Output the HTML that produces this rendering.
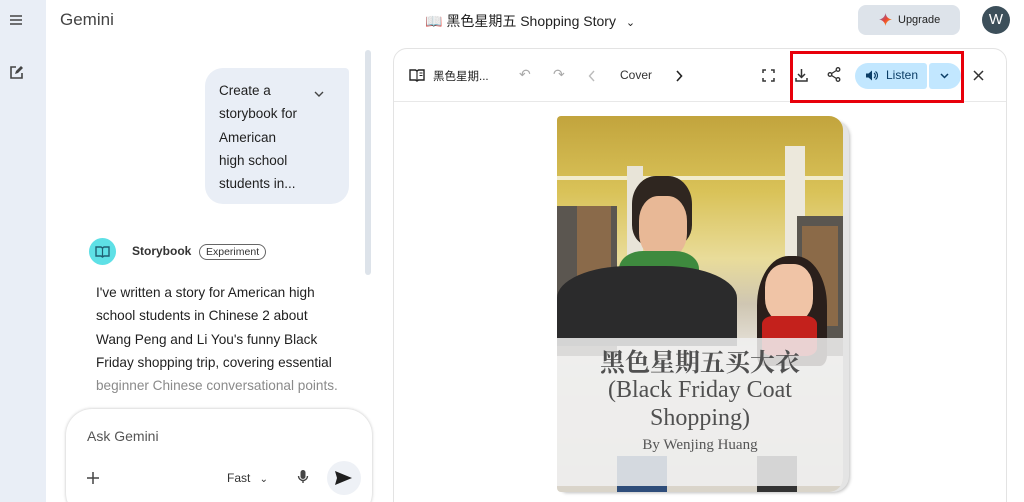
<!DOCTYPE html>
<html><head><meta charset="utf-8">
<style>
*{box-sizing:border-box;margin:0;padding:0}
html,body{width:1024px;height:502px;overflow:hidden}
body{background:#fff;font-family:"Liberation Sans","Noto Sans CJK SC",sans-serif;color:#1f1f1f;position:relative}
.a{position:absolute}
svg{display:block}
</style></head><body>
<div class="a" style="left:0;top:0;width:46px;height:502px;background:#e9eef6"></div>
<svg class="a" style="left:9px;top:13px" width="14" height="14" viewBox="0 0 14 14"><path d="M1 3h12M1 7h12M1 11h12" stroke="#444" stroke-width="1.6"/></svg>
<svg class="a" style="left:9px;top:65px" width="15" height="15" viewBox="0 0 15 15"><path d="M7 2H2v11h11V8" fill="none" stroke="#444" stroke-width="1.6"/><path d="M6 9l1-3 5-5 2 2-5 5z" fill="#444"/></svg>
<div class="a" style="left:60px;top:10px;font-size:17px;color:#444">Gemini</div>

<div class="a" style="left:425px;top:11px;font-size:14px;color:#1f1f1f">📖 黑色星期五 Shopping Story <span style="font-size:11px;margin-left:6px">⌄</span></div>
<div class="a" style="left:858px;top:5px;width:102px;height:30px;background:#dde3ea;border-radius:8px;font-size:11px;line-height:30px;padding-left:40px;color:#1f1f1f">Upgrade</div>
<svg class="a" style="left:879px;top:13px" width="13" height="13" viewBox="0 0 14 14"><defs><linearGradient id="g" x1="0" y1="0" x2="1" y2="1"><stop offset="0" stop-color="#4285f4"/><stop offset=".5" stop-color="#ea4335"/><stop offset="1" stop-color="#fbbc04"/></linearGradient></defs><path d="M7 0C7.6 4 10 6.4 14 7 10 7.6 7.6 10 7 14 6.4 10 4 7.6 0 7 4 6.4 6.4 4 7 0z" fill="url(#g)"/></svg>
<div class="a" style="left:982px;top:6px;width:28px;height:28px;border-radius:50%;background:#3c4f5a;color:#fff;font-size:15px;line-height:28px;text-align:center">W</div>

<div class="a" style="left:365px;top:50px;width:6px;height:225px;background:#dde3ea;border-radius:3px"></div>
<div class="a" style="left:205px;top:68px;width:144px;height:136px;background:#e9eef6;border-radius:18px 4px 18px 18px"></div>
<div class="a" style="left:219px;top:79px;font-size:13.5px;line-height:23.3px;color:#1f1f1f;width:110px">Create a<br>storybook for<br>American<br>high school<br>students in...</div>
<svg class="a" style="left:313px;top:90px" width="12" height="8" viewBox="0 0 12 8"><path d="M2 2l4 4 4-4" fill="none" stroke="#444" stroke-width="1.4"/></svg>
<div class="a" style="left:89px;top:238px;width:27px;height:27px;border-radius:50%;background:#5ee0e6"></div>
<svg class="a" style="left:95px;top:245px" width="15" height="13" viewBox="0 0 15 13"><path d="M1 2h5l1.5 1 1.5-1h5v9H9l-1.5 1L6 11H1z" fill="none" stroke="#1f5f73" stroke-width="1.4"/><path d="M7.5 3v8" stroke="#1f5f73" stroke-width="1.2"/></svg>
<div class="a" style="left:132px;top:244px;font-size:12px;font-weight:bold;color:#333">Storybook</div>
<div class="a" style="left:199px;top:244px;height:16px;padding:0 6px;border:1px solid #666;border-radius:9px;font-size:10.5px;line-height:14px;color:#333">Experiment</div>
<div class="a" style="left:96px;top:281px;font-size:13.6px;line-height:23.3px;color:#1f1f1f;width:270px">I've written a story for American high<br>school students in Chinese 2 about<br>Wang Peng and Li You's funny Black<br>Friday shopping trip, covering essential<br><span style="color:#8a8a8a">beginner Chinese conversational points.</span></div>
<div class="a" style="left:66px;top:409px;width:306px;height:110px;border-radius:26px;background:#fff;box-shadow:0 0 3px rgba(0,0,0,.25)"></div>
<div class="a" style="left:87px;top:428px;font-size:14px;color:#555">Ask Gemini</div>
<svg class="a" style="left:86px;top:471px" width="14" height="14" viewBox="0 0 14 14"><path d="M7 1v12M1 7h12" stroke="#444" stroke-width="1.5"/></svg>
<div class="a" style="left:227px;top:471px;font-size:12px;color:#333">Fast <span style="font-size:10px;margin-left:6px">⌄</span></div>
<svg class="a" style="left:297px;top:469px" width="12" height="16" viewBox="0 0 12 16"><rect x="3.5" y="1" width="5" height="9" rx="2.5" fill="#444"/><path d="M1.5 7a4.5 4.5 0 009 0M6 11.5V14" fill="none" stroke="#444" stroke-width="1.4"/></svg>
<div class="a" style="left:327px;top:461px;width:34px;height:34px;border-radius:50%;background:#eef1f6"></div>
<svg class="a" style="left:335px;top:471px" width="17" height="14" viewBox="0 0 17 14"><path d="M0 0l17 7-17 7 2-7z" fill="#1f1f1f"/></svg>

<div class="a" style="left:393px;top:48px;width:614px;height:470px;border:1px solid #e3e3e3;border-radius:14px"></div>
<div class="a" style="left:394px;top:101px;width:612px;height:1px;background:#e8e8e8"></div>
<svg class="a" style="left:409px;top:69px" width="16" height="13" viewBox="0 0 16 13"><path d="M1 1h5.5L8 2l1.5-1H15v10H9.5L8 12l-1.5-1H1z" fill="none" stroke="#222" stroke-width="1.4"/><path d="M8 2v10M10.5 4h3M10.5 6.5h3" stroke="#222" stroke-width="1.1"/></svg>
<div class="a" style="left:433px;top:68px;font-size:11.5px;color:#1f1f1f">黑色星期...</div>
<div class="a" style="left:519px;top:66px;font-size:14px;color:#aaa">↶</div>
<div class="a" style="left:553px;top:66px;font-size:14px;color:#aaa">↷</div>
<svg class="a" style="left:588px;top:70px" width="8" height="12" viewBox="0 0 8 12"><path d="M6 1L1.5 6 6 11" fill="none" stroke="#bbb" stroke-width="1.4"/></svg>
<div class="a" style="left:620px;top:68px;font-size:12px;color:#333">Cover</div>
<svg class="a" style="left:675px;top:70px" width="8" height="12" viewBox="0 0 8 12"><path d="M2 1l4.5 5L2 11" fill="none" stroke="#222" stroke-width="1.6"/></svg>
<svg class="a" style="left:762px;top:69px" width="13" height="13" viewBox="0 0 13 13"><path d="M1 4V1h3M9 1h3v3M12 9v3H9M4 12H1V9" fill="none" stroke="#333" stroke-width="1.5"/></svg>
<svg class="a" style="left:795px;top:68px" width="13" height="14" viewBox="0 0 13 14"><path d="M6.5 1v8M3 6l3.5 3.5L10 6M1 10v3h11v-3" fill="none" stroke="#333" stroke-width="1.5"/></svg>
<svg class="a" style="left:827px;top:67px" width="14" height="15" viewBox="0 0 14 15"><circle cx="11" cy="2.5" r="1.8" fill="none" stroke="#333" stroke-width="1.3"/><circle cx="3" cy="7.5" r="1.8" fill="none" stroke="#333" stroke-width="1.3"/><circle cx="11" cy="12.5" r="1.8" fill="none" stroke="#333" stroke-width="1.3"/><path d="M4.6 6.5l4.8-3M4.6 8.5l4.8 3" stroke="#333" stroke-width="1.3"/></svg>
<div class="a" style="left:855px;top:63px;width:72px;height:26px;background:#c2e7ff;border-radius:13px 3px 3px 13px"></div>
<svg class="a" style="left:866px;top:70px" width="12" height="11" viewBox="0 0 12 11"><path d="M0 3.5h2.5L6 0.5v10L2.5 7.5H0z" fill="#0b3d66"/><path d="M8 3a3 3 0 010 5M9.5 1.5a5 5 0 010 8" fill="none" stroke="#0b3d66" stroke-width="1.2"/></svg>
<div class="a" style="left:886px;top:68px;font-size:12px;color:#0b3d66">Listen</div>
<div class="a" style="left:929px;top:63px;width:32px;height:26px;background:#c2e7ff;border-radius:3px 13px 13px 3px"></div>
<svg class="a" style="left:940px;top:73px" width="9" height="6" viewBox="0 0 9 6"><path d="M1 1l3.5 3.5L8 1" fill="none" stroke="#0b3d66" stroke-width="1.5"/></svg>
<svg class="a" style="left:973px;top:70px" width="11" height="11" viewBox="0 0 11 11"><path d="M1 1l9 9M10 1l-9 9" stroke="#333" stroke-width="1.5"/></svg>
<div class="a" style="left:790px;top:51px;width:174px;height:52px;border:3px solid #e8000b"></div>

<div class="a" style="left:560px;top:120px;width:289px;height:372px;background:#e4e4e4;border-radius:6px 16px 16px 6px;box-shadow:1px 1px 3px rgba(0,0,0,.25)"></div>
<div class="a" style="left:557px;top:116px;width:286px;height:376px;border-radius:4px 14px 14px 4px;overflow:hidden;background:linear-gradient(#c2a43d 0,#d9c258 20%,#e9dc9a 38%,#cfc6b2 50%,#e6e2da 62%,#d9d4c9 100%)">
  <div class="a" style="left:0;top:60px;width:286px;height:4px;background:#f2eccc"></div>
  <div class="a" style="left:70px;top:50px;width:16px;height:120px;background:#e8e4d8"></div>
  <div class="a" style="left:228px;top:30px;width:20px;height:110px;background:#ece8dc"></div>
  <div class="a" style="left:0;top:90px;width:60px;height:150px;background:#5b5650"></div>
  <div class="a" style="left:240px;top:100px;width:46px;height:140px;background:#5a5650"></div>
  <div class="a" style="left:20px;top:90px;width:34px;height:120px;background:#8a6a4a"></div>
  <div class="a" style="left:245px;top:110px;width:36px;height:100px;background:#8b6a48"></div>
  <div class="a" style="left:75px;top:60px;width:60px;height:70px;background:#2f2620;border-radius:40% 40% 30% 30%"></div>
  <div class="a" style="left:82px;top:80px;width:48px;height:62px;background:#e8b896;border-radius:40%"></div>
  <div class="a" style="left:62px;top:135px;width:80px;height:60px;background:#3e8a3e;border-radius:30%"></div>
  <div class="a" style="left:0;top:150px;width:180px;height:80px;background:#2b2b2c;border-radius:40% 40% 0 0"></div>
  <div class="a" style="left:200px;top:140px;width:70px;height:110px;background:#2a1f1b;border-radius:45% 45% 10% 10%"></div>
  <div class="a" style="left:208px;top:148px;width:48px;height:58px;background:#f0c4a6;border-radius:40%"></div>
  <div class="a" style="left:205px;top:200px;width:55px;height:40px;background:#c4211c;border-radius:20%"></div>
  <div class="a" style="left:60px;top:340px;width:50px;height:36px;background:#2e4d7a"></div>
  <div class="a" style="left:200px;top:340px;width:40px;height:36px;background:#333"></div>
  <div class="a" style="left:0;top:222px;width:286px;height:148px;background:rgba(240,240,240,.86)"></div>
  <div class="a" style="left:0;top:227px;width:286px;text-align:center;font-family:'Noto Serif CJK SC','Noto Sans CJK SC',serif;font-weight:bold;font-size:25px;color:#505050">黑色星期五买大衣</div>
  <div class="a" style="left:0;top:260px;width:286px;text-align:center;font-family:'Liberation Serif',serif;font-size:24px;line-height:28px;color:#505050">(Black Friday Coat<br>Shopping)</div>
  <div class="a" style="left:0;top:321px;width:286px;text-align:center;font-family:'Liberation Serif',serif;font-size:15px;color:#555">By Wenjing Huang</div>
</div>
</body></html>
